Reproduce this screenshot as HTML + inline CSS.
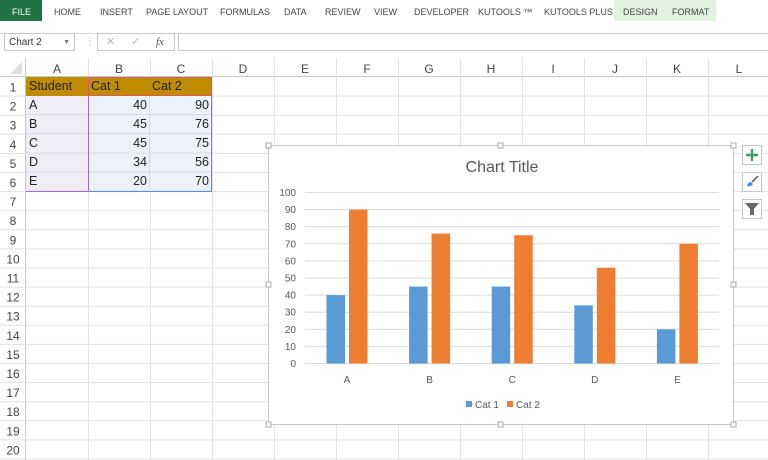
<!DOCTYPE html>
<html><head><style>
body{margin:0;width:768px;height:460px;overflow:hidden;background:#fff;font-family:"Liberation Sans",sans-serif;position:relative}
.t{position:absolute;top:0;height:22px;line-height:24px;font-size:9px;color:#444;white-space:nowrap}
.a{position:absolute;white-space:nowrap}
.n{position:absolute;width:40px;text-align:right}
</style></head><body>
<div class="a" style="left:0;top:0;width:42px;height:21px;background:#217346"></div>
<div class="t" style="left:12px;color:#fff">FILE</div>
<div class="t" style="left:54px">HOME</div>
<div class="t" style="left:100px">INSERT</div>
<div class="t" style="left:146px">PAGE LAYOUT</div>
<div class="t" style="left:220px">FORMULAS</div>
<div class="t" style="left:284px">DATA</div>
<div class="t" style="left:325px">REVIEW</div>
<div class="t" style="left:374px">VIEW</div>
<div class="t" style="left:414px">DEVELOPER</div>
<div class="t" style="left:478px">KUTOOLS ™</div>
<div class="a" style="left:614px;top:0;width:102px;height:21px;background:#e3f1e1"></div>
<div class="t" style="left:544px">KUTOOLS PLUS</div>
<div class="t" style="left:623px">DESIGN</div>
<div class="t" style="left:672px">FORMAT</div>
<div class="a" style="left:0;top:33px;width:768px;height:1px;background:#dadada"></div>
<div class="a" style="left:4px;top:33px;width:71px;height:18px;border:1px solid #c6c6c6;box-sizing:border-box;font-size:10px;line-height:17px;padding-left:4px;color:#333">Chart 2<span style="position:absolute;right:4px;font-size:7px;color:#777">▼</span></div>
<div class="a" style="left:85px;top:36px;font-size:10px;color:#aaa">⋮</div>
<div class="a" style="left:97px;top:33px;width:78px;height:18px;border:1px solid #c6c6c6;box-sizing:border-box;font-size:11px;line-height:17px;color:#bbb"><span style="position:absolute;left:8px">✕</span><span style="position:absolute;left:33px">✓</span><span style="position:absolute;left:58px;color:#555;font-style:italic;font-family:'Liberation Serif',serif">fx</span></div>
<div class="a" style="left:178px;top:33px;width:600px;height:18px;border:1px solid #c6c6c6;box-sizing:border-box"></div>
<svg class="a" style="left:0;top:0" width="768" height="460" font-family="Liberation Sans" >
<rect x="0" y="58" width="768" height="19" fill="#fff"/>
<path d="M22 62 L22 74 L10 74Z" fill="#dcdcdc"/>
<g stroke="#e1e1e1" stroke-width="1">
<line x1="0" y1="76.5" x2="768" y2="76.5" stroke="#c8c8c8"/>
<line x1="25.5" y1="58" x2="25.5" y2="460" stroke="#c8c8c8"/>
</g>
<g stroke="#e1e1e1" id="g"></g>
<g font-size="12" fill="#444" text-anchor="middle" id="ch"></g>
<g font-size="12" fill="#444" text-anchor="middle" id="rh"></g>
</svg>
<script>
var g=document.getElementById('g'),ch=document.getElementById('ch'),rh=document.getElementById('rh'),ns='http://www.w3.org/2000/svg';
function el(p,t,a,tx){var e=document.createElementNS(ns,t);for(var k in a)e.setAttribute(k,a[k]);if(tx!==undefined)e.textContent=tx;p.appendChild(e);}
var cols='ABCDEFGHIJKL';
for(var i=0;i<12;i++){var x=26+62*i;el(g,'line',{x1:x+62.5,y1:58,x2:x+62.5,y2:460});el(ch,'text',{x:x+31,y:73},cols[i]);}
for(var r=1;r<=21;r++){var y=77+(r-1)*19.1;el(g,'line',{x1:0,y1:y+19.1,x2:768,y2:y+19.1});el(rh,'text',{x:13,y:y+14.5},r);}
</script>
<div class="a" style="left:26px;top:77px;width:186px;height:19px;background:#bf8b00"></div>
<div class="a" style="left:26px;top:96px;width:62px;height:96px;background:#f1edf7"></div>
<div class="a" style="left:88px;top:96px;width:124px;height:96px;background:#edf1fb"></div>
<div class="a" style="left:26px;top:96px;width:186px;height:96px;background:repeating-linear-gradient(to bottom,transparent 0,transparent 18.1px,#dcdce4 18.1px,#dcdce4 19.1px)"></div>
<div class="a" style="left:149px;top:96px;width:1px;height:96px;background:#d8d8e4"></div>
<div class="a" style="left:26px;top:191px;width:62px;height:1px;background:#9b6fd0"></div>
<div class="a" style="left:88px;top:95px;width:124px;height:97px;border:1px solid #5b8de6;border-top:0;box-sizing:border-box"></div>
<div class="a" style="left:88px;top:96px;width:1px;height:96px;background:#9b6fd0"></div>
<div class="a" style="left:88px;top:77px;width:124px;height:19px;border:1px solid #e05a5a;box-sizing:border-box"></div>
<div class="a" style="left:0;top:77px;font-size:12.5px;color:#222">
<div class="a" style="left:29px;top:2px">Student</div><div class="a" style="left:91px;top:2px">Cat 1</div><div class="a" style="left:152px;top:2px">Cat 2</div>
<div class="a" style="left:29px;top:21px">A</div><div class="a" style="left:29px;top:40px">B</div><div class="a" style="left:29px;top:59px">C</div><div class="a" style="left:29px;top:78px">D</div><div class="a" style="left:29px;top:97px">E</div>
<div class="n" style="left:107px;top:21px">40</div><div class="n" style="left:107px;top:40px">45</div><div class="n" style="left:107px;top:59px">45</div><div class="n" style="left:107px;top:78px">34</div><div class="n" style="left:107px;top:97px">20</div>
<div class="n" style="left:169px;top:21px">90</div><div class="n" style="left:169px;top:40px">76</div><div class="n" style="left:169px;top:59px">75</div><div class="n" style="left:169px;top:78px">56</div><div class="n" style="left:169px;top:97px">70</div>
</div>
<svg class="a" style="left:0;top:0" width="768" height="460" font-family="Liberation Sans">
<rect x="268.5" y="145.5" width="465" height="279" fill="#fff" stroke="#c8c8c8"/>
<g fill="#fff" stroke="#aaa"><rect x="266" y="143" width="5" height="5"/><rect x="498" y="143" width="5" height="5"/><rect x="731" y="143" width="5" height="5"/><rect x="266" y="282" width="5" height="5"/><rect x="731" y="282" width="5" height="5"/><rect x="266" y="422" width="5" height="5"/><rect x="498" y="422" width="5" height="5"/><rect x="731" y="422" width="5" height="5"/></g>
<text x="502" y="172" font-size="16" fill="#595959" text-anchor="middle">Chart Title</text>
<g stroke="#d9d9d9" id="gl"></g>
<g font-size="10" fill="#595959" text-anchor="end" id="yl"></g>
<g id="bars"></g>
<g font-size="10" fill="#595959" text-anchor="middle" id="xl"></g>
<rect x="466" y="401" width="6" height="6" fill="#5b9bd5"/><text x="475" y="408" font-size="10" fill="#595959">Cat 1</text>
<rect x="507" y="401" width="6" height="6" fill="#ed7d31"/><text x="516" y="408" font-size="10" fill="#595959">Cat 2</text>
<g fill="#fff" stroke="#c6c6c6"><rect x="742.5" y="145.5" width="19" height="19"/><rect x="742.5" y="172.5" width="19" height="19"/><rect x="742.5" y="199.5" width="19" height="19"/></g>
<path d="M752 149v12M746 155h12" stroke="#3f9c6d" stroke-width="2.4"/>
<path d="M747 186 q1-4 4-4 l2 2 q-2 3-6 2z" fill="#4a8fd8"/><path d="M752 182l6-6" stroke="#555" stroke-width="1.5"/>
<path d="M745 203h14l-5 6v6h-4v-6z" fill="#666"/>
</svg>
<script>
var gl=document.getElementById('gl'),yl=document.getElementById('yl'),bars=document.getElementById('bars'),xl=document.getElementById('xl');
for(var v=0;v<=100;v+=10){var y=363.5-v*1.71;el(gl,'line',{x1:305,y1:y,x2:719,y2:y});el(yl,'text',{x:296,y:y+3.5},String(v));}
var c1=[40,45,45,34,20],c2=[90,76,75,56,70],L='ABCDE';
for(var i=0;i<5;i++){var cx=347+82.6*i;
el(bars,'rect',{x:cx-20.5,y:363.5-c1[i]*1.71,width:18.5,height:c1[i]*1.71,fill:'#5b9bd5'});
el(bars,'rect',{x:cx+2,y:363.5-c2[i]*1.71,width:18.5,height:c2[i]*1.71,fill:'#ed7d31'});
el(xl,'text',{x:cx,y:383},L[i]);}
</script>
</body></html>
